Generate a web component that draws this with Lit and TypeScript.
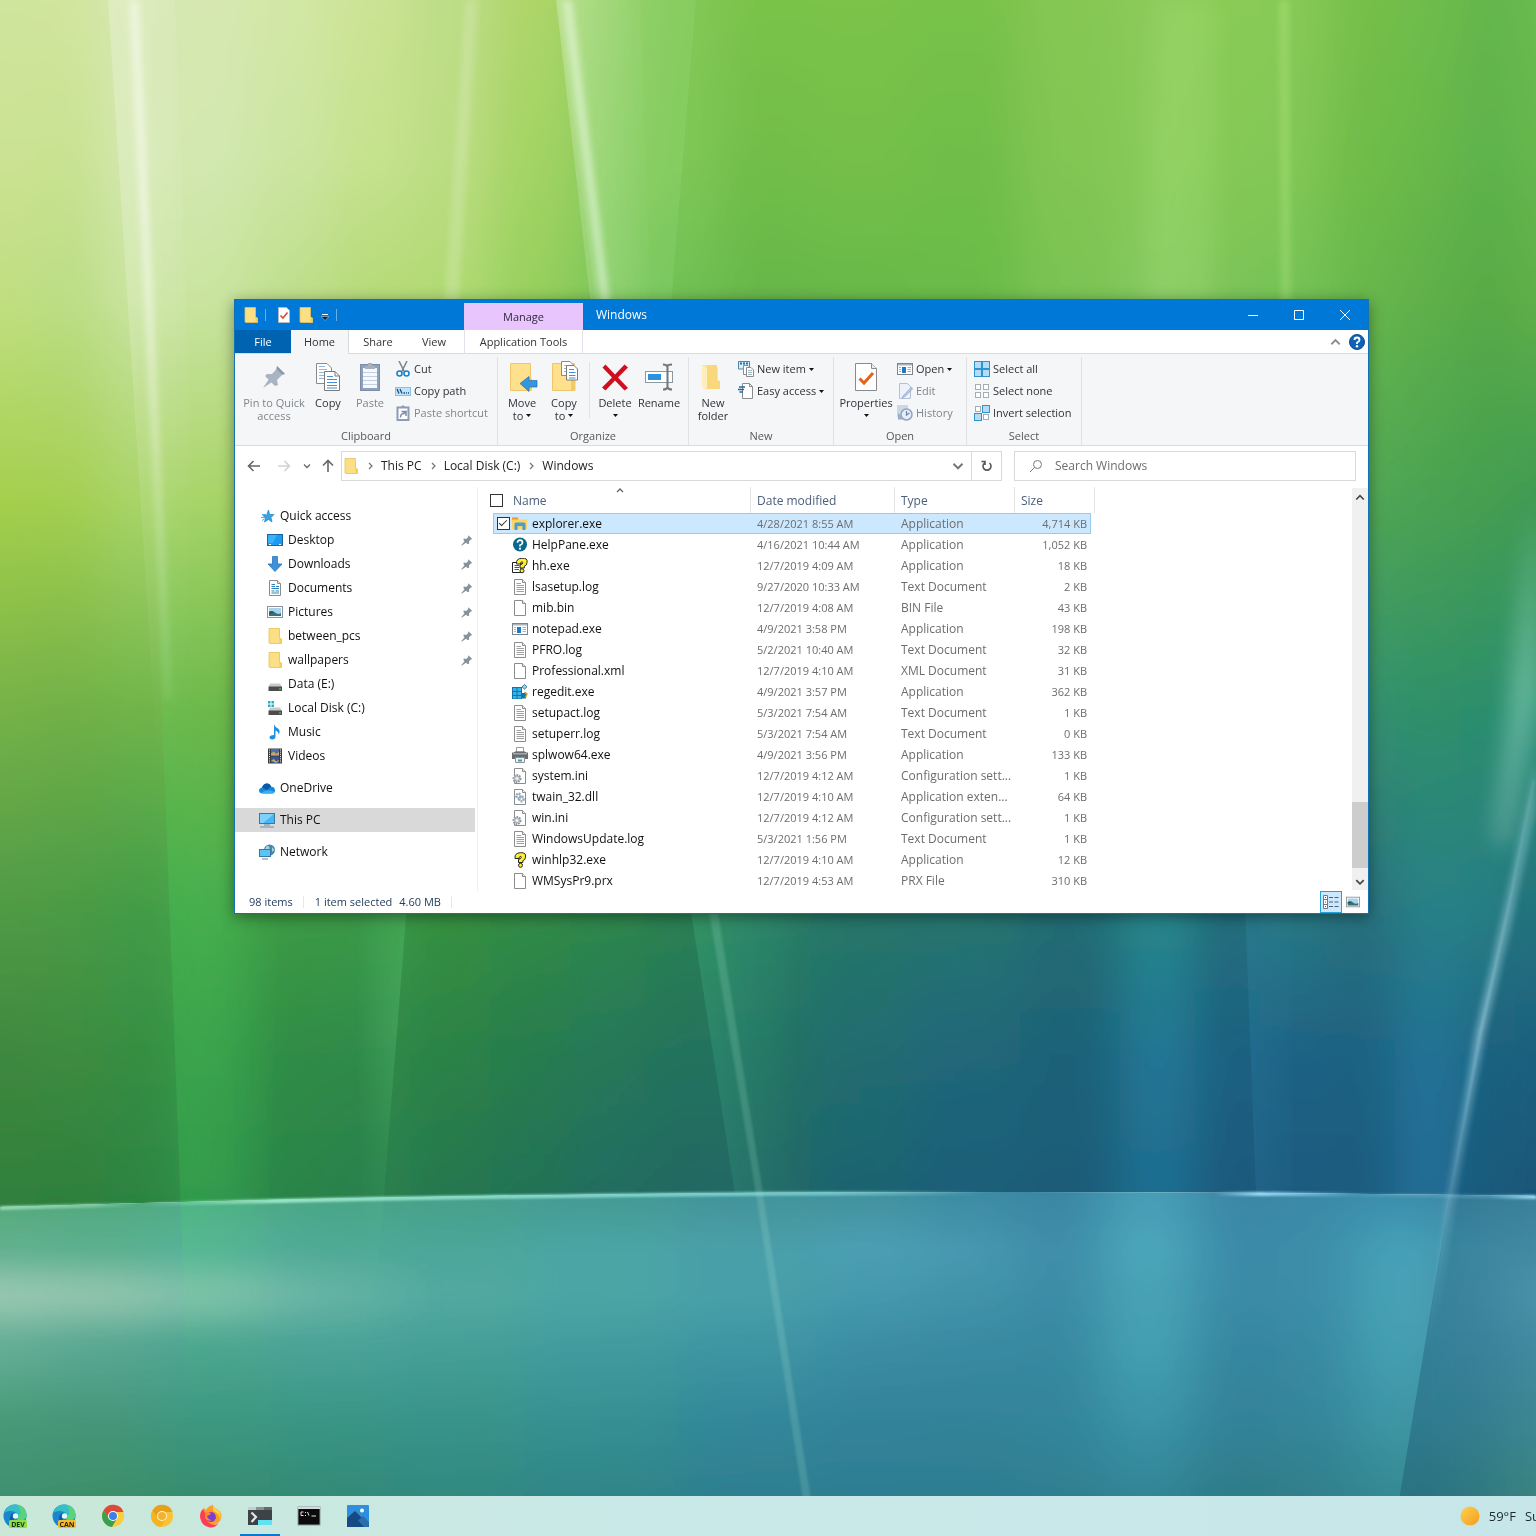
import { LitElement, html, css, svg, nothing, TemplateResult, SVGTemplateResult } from 'lit';
import { customElement, property, state } from 'lit/decorators.js';
import { classMap } from 'lit/directives/class-map.js';

// ---------- icons ----------

const page = svg`<path d="M2.500.500H10.500L13.500 3.500V15.500H2.500Z" fill="#fff" stroke="#8c8c8c"/><path d="M10.500.500V3.500H13.500" fill="#eee" stroke="#8c8c8c"/>`;

const gear = (x: number, y: number, r: number, color: string) => svg`
  <circle cx=${x} cy=${y} r=${r} fill="#e4e8eb" stroke=${color} stroke-width="2" stroke-dasharray="1.600 1"/>
  <circle cx=${x} cy=${y} r=${r - 1} fill="#cfd5da" stroke="#8f979e" stroke-width=".6"/>
  <circle cx=${x} cy=${y} r="1" fill="#fff"/>`;

const folder = svg`<path d="M2 .500H12.500V10L14.500 11V15.500H3L2 15Z" fill="#fbdf84" stroke="#e6c25c" stroke-width=".8"/><path d="M12.500 10V15.500H14.500V11Z" fill="#f3cc5c"/>`;

const picture = svg`<rect x=".500" y="2.500" width="15" height="11" fill="#fff" stroke="#8d9399"/><rect x="2" y="4" width="12" height="8" fill="#a9d4ee"/><path d="M2 8Q5 6 8 8.500T14 9V12H2Z" fill="#31727d"/><path d="M2 8Q4 6.500 7 8.500L2 10Z" fill="#2d5a4a"/>`;

const appWindow = svg`<rect x=".500" y="2.500" width="15" height="11" fill="#fff" stroke="#7d858c"/><rect x="1" y="3" width="14" height="1.500" fill="#a9b4bd"/><rect x="5" y="6" width="4" height="6" fill="#1c7bc4"/><path d="M2 6.500H4M2 8.500H4M2 10.500H4M10.500 6.500H14M10.500 8.500H14M10.500 10.500H14" stroke="#a6b0b8"/>`;

const smallPin = svg`<path d="M10 1.500L15 6.500L13 7.300L10.500 10L11 12.500L9 13.500L3 7.500L4 6L7 6.500L9.500 4Z"/><path d="M6 8.500L1 15L7.500 10.500Z" stroke="#87919b"/>`;

const helpMark = (fill: string, stroke: string) => svg`
  <path d="M3 6Q2.500 1 8.500 .700T13.500 5Q13.500 8 10.800 8.700V10.500H6.500V7.500Q9.600 6.500 9.300 5.200T8 4.400T7.200 6.500H3Z" fill=${fill} stroke=${stroke}/>
  <circle cx="8.500" cy="13.300" r="2" fill=${fill} stroke=${stroke}/>`;

const disk = svg`<path d="M3 7.500H13L15 11H1.500Z" fill="#c9c9c9"/><rect x="1.500" y="10.500" width="13.500" height="4.500" rx=".5" fill="#4c4c4c"/><rect x="12" y="12.500" width="2" height="1" fill="#55d46a"/>`;

const cells = (fills: boolean[]) => fills.map((on, i) => {
  const x = (i % 2) * 8;
  const y = Math.floor(i / 2) * 8;
  return on
    ? svg`<rect x=${x + 0.5} y=${y + 0.5} width="7" height="7" fill="#b5dcf7" stroke="#2f93cf"/>`
    : svg`<rect x=${x + 1.5} y=${y + 1.5} width="5" height="5" fill="#fff" stroke="#a5adb3"/>`;
});

const edge = svg`
  <circle cx="12" cy="12" r="11.500" fill="#1a86d0"/>
  <path d="M1 9Q4 .500 12 .500Q23.500 1 23.500 12Q22.500 17 16 16.500Q13 16 14.500 13.500Q15.500 9 11 7.500Q5 6 1 9Z" fill="#35bfc9"/>
  <path d="M15 1Q24 4 23.500 12Q22 17 16 16.500Q13.500 16 14.500 13.500Q20 10 15 1Z" fill="#5bd37a"/>
  <path d="M7 14Q8 8.500 12 9.500Q8 16 15 21Q18 22 20 20.500Q15 25 9 22.500Q6 19 7 14Z" fill="#0f5aa8"/>
  <circle cx="12.500" cy="12" r="2.700" fill="#e6f7f4"/>`;

const ICONS: Record<string, SVGTemplateResult> = {
  folder,
  picture,
  appWindow,
  smallPin,
  page,
  star: svg`<path d="M9.500 2L10.500 6.500L15 6.500L12 9.500L13 14L9.500 11.500L5.500 14L6.500 10L4 7.500H7.500Z" fill="#37a4e6" stroke="#1f7fc0" stroke-width=".7"/><path d="M3 6.500H7M2 9.500H6M3 12.500L5.500 11" stroke="#49aee8"/>`,
  desktop: svg`<rect x=".500" y="2.500" width="15" height="11" fill="#1b9bf0" stroke="#1766a3"/><path d="M1 3H10L6 11H1Z" fill="#3cb0f8"/><path d="M2 12.500H4M12 12.500H14" stroke="#fff"/>`,
  download: svg`<path d="M5.500.500H10.500V8H15L8 15.500L1 8H5.500Z" fill="#3d92dc" stroke="#2c74b5" stroke-width=".8"/>`,
  documents: svg`${page}<path d="M4.500 4.500H8M4.500 6.500H8M9 6.500H12M4.500 8.500H12M4.500 11H7.500M8.500 11H12M4.500 13H12" stroke="#2d83b9"/>`,
  disk,
  systemDisk: svg`${disk}<path d="M1 1H3.500V3.500H1ZM4.500 1H7V3.500H4.500ZM1 4.500H3.500V7H1ZM4.500 4.500H7V7H4.500Z" fill="#27aecb"/>`,
  music: svg`<path d="M7 .500Q8 3 11 4.500Q14 7 11.500 11Q12 7.500 8.500 6.500V12.500Q8.500 15.500 5 15.500Q2.500 15.500 2.500 13.500Q2.500 11 7 11Z" fill="#1f90e0"/>`,
  video: svg`<rect x="1" y=".500" width="14" height="15" fill="#3a3a3a"/><rect x="4" y="1" width="8" height="6.500" fill="#4a6fae"/><rect x="4" y="8.500" width="8" height="6.500" fill="#34569b"/><path d="M4 5.500L7 3.500L9 6L12 4V7.500H4ZM4 12.500L7 11L9 13.500L12 12V13L9 15Z" fill="#c8a863"/><path d="M2.500 1.500V15M13.500 1.500V15" stroke="#fff" stroke-dasharray="1 1.200"/>`,
  cloud: svg`<path d="M4 13.500Q0 13.500 0 10.500Q0 8 3 7.500Q4.500 3.500 8 3.500Q11 3.500 12 6.500Q16 7 16 10.500Q16 13.500 13 13.500Z" fill="#1689dc"/><path d="M3 7.500Q4.500 3.500 8 3.500Q11 3.500 12 6.500L8 10Z" fill="#0c59a4"/><path d="M2 13Q8 8 15.500 12Q14.500 13.500 13 13.500H4Z" fill="#37b0f2"/>`,
  pc: svg`<rect x=".500" y="1.500" width="15" height="10" fill="#45b7f5" stroke="#3a78a0"/><path d="M1 2H15L4 11H1Z" fill="#7fd0fb"/><path d="M5 13H11M1 15H15" stroke="#6b8ea8"/>`,
  network: svg`<circle cx="10.500" cy="6" r="5.500" fill="#4286b4"/><path d="M8 1.500Q12 3 10 6L6 5ZM13 3L15.500 6L13 8Z" fill="#a8d5d0"/><rect x=".500" y="5.500" width="11" height="7" fill="#5bc3f7" stroke="#3a78a0"/><path d="M3 15H9" stroke="#5e86a5"/>`,
  explorer: svg`<path d="M0 1.500H6L7.500 3.500H15V13H0Z" fill="#f9d566"/><path d="M0 1.500H6V3.500H0Z" fill="#e8962e"/><path d="M2.500 14V8Q2.500 6.500 4 6.500H12Q13.500 6.500 13.500 8V14H10.500V10H5.500V14Z" fill="#4b9ccf"/>`,
  helpPane: svg`<circle cx="8" cy="7.500" r="7" fill="#08678c"/><path d="M5.500 5.700Q5.500 3.200 8 3.200T10.500 5.700Q10.500 7.200 8 8.200V9.500" fill="none" stroke="#fff" stroke-width="1.700"/><circle cx="8" cy="11.700" r="1.100" fill="#fff"/>`,
  hh: svg`<path d="M.500 4.500H9V14.500H.500Z" fill="#fff" stroke="#222"/><path d="M2.500 7.500H7M2.500 9.500H7M2.500 11.500H7" stroke="#555"/><g transform="translate(1.500 -.500)">${helpMark('#fdf22d', '#222')}</g>`,
  text: svg`${page}<path d="M4.500 4.500H9M4.500 6.500H12M4.500 8.500H12M4.500 10.500H12M4.500 12.500H12" stroke="#a0a0a0"/>`,
  regedit: svg`<path d="M0 3H10V15H0Z" fill="#1673a8"/><path d="M1 4H4.500V7H1ZM5.500 4H9V7H5.500ZM1 8H4.500V11H1ZM5.500 8H9V11H5.500ZM1 12H4.500V14.500H1ZM5.500 12H9V14.500H5.500Z" fill="#35b3ea"/><path d="M10 9H14V14.500H10Z" fill="#1673a8"/><path d="M12.500 .500L15 2.800L12.500 5.200L10 2.800Z" fill="#9fd4ea" stroke="#2d6d8e" stroke-width=".9"/><path d="M12.500 8L15 10L13.500 13.500" fill="none" stroke="#c7a543" stroke-width="1.500"/>`,
  printer: svg`<path d="M4.500.500H11.500V5H4.500Z" fill="#fff" stroke="#999"/><path d="M0 5.500H2L3 4.500H13L14 5.500H16V12H0Z" fill="#666c70"/><path d="M1 6H15V7.500H1Z" fill="#a3a9ad"/><path d="M3.500 10.500H12.500V15.500H3.500Z" fill="#e6f2f8" stroke="#8c9499"/><path d="M6 12.500H10V14.500H6Z" fill="#4ba0a8"/>`,
  ini: svg`${page}${gear(5, 10.5, 3.5, '#8f979e')}`,
  dll: svg`${page}${gear(6.5, 7, 2.4, '#8fa6b9')}${gear(9.5, 10, 2.4, '#8fa6b9')}`,
  winhlp: helpMark('#fdf22d', '#222'),
  cut: svg`<path d="M4 0L9.500 11M12 0L6.500 11" stroke="#77838c" stroke-width="1.500"/><circle cx="4.500" cy="12.500" r="2.500" fill="#fff" stroke="#1883c8" stroke-width="1.600"/><circle cx="11.500" cy="12.500" r="2.500" fill="#fff" stroke="#1883c8" stroke-width="1.600"/>`,
  copyPath: svg`<rect x=".500" y="4.500" width="15" height="8" fill="#c0e3fa" stroke="#8dbfe4"/><path d="M2 6L4 10.500M5 6L7 10.500M8.500 10H10M11 10H12M13 10H14" stroke="#114d7c" stroke-width="1.300"/>`,
  pasteShortcut: svg`<path d="M2.500 2.500H13.500V15H2.500Z" fill="#fff" stroke="#8d9cb5" stroke-width="2"/><path d="M5.500 3V1.500H7V.500H9V1.500H10.500V3Z" fill="#8d9cb5"/><path d="M5.500 12.500Q5.500 8.500 9 8.500V6.500H11V11M9 8.500L11 6.500H6.500" fill="none" stroke="#7c8dab" stroke-width="1.500"/>`,
  newItem: svg`<path d="M.500.500H11.500V8H.500Z" fill="#dbeefb" stroke="#52839f"/><path d="M2 2.500H4M5 2.500H7M8 2.500H10" stroke="#1b72ad" stroke-width="2"/><path d="M5.500 4.500H10L12.500 7V13.500H5.500Z" fill="#fff" stroke="#8c8c8c"/><path d="M8.500 6.500H13L15.500 9V15.500H8.500Z" fill="#fff" stroke="#8c8c8c"/><path d="M10 9.500H14M10 11.500H14M10 13.500H14" stroke="#9fb3c1"/>`,
  easyAccess: svg`<path d="M4.500.500H11.500L14.500 3.500V15.500H4.500Z" fill="#fff" stroke="#8c8c8c"/><path d="M11.500.500V3.500H14.500" fill="none" stroke="#8c8c8c"/><path d="M1 4H7M0 6.500H6M1.500 9H5" stroke="#256999" stroke-width="1.300"/>`,
  edit: svg`<path d="M2.500.500H10.500L13.500 3.500V15.500H2.500Z" fill="#edf2fa" stroke="#b3c0d6"/><path d="M14.500 4L6 13L5 15L7.500 14L15.500 6Z" fill="#b7c6df" stroke="#93a6c6" stroke-width=".7"/>`,
  history: svg`<path d="M0 0H11V12H0Z" fill="#cdd7e8"/><circle cx="9.500" cy="9.500" r="5.500" fill="#e8eef7" stroke="#8ea3c6" stroke-width="1.500"/><path d="M9.500 6V10L12.500 8" fill="none" stroke="#7188b3" stroke-width="1.300"/><path d="M1 8V14.500H8Z" fill="#97acd0"/>`,
  selectAll: svg`${cells([true, true, true, true])}`,
  selectNone: svg`${cells([false, false, false, false])}`,
  invert: svg`${cells([false, true, true, false])}`,
  check: svg`<path d="M2.500.500H10.500L13.500 3.500V15.500H2.500Z" fill="#fff" stroke="#b8b8c0"/><path d="M4.500 8.500L7 11L11.500 5.500" fill="none" stroke="#d5503c" stroke-width="1.700"/>`,
  details: svg`<path d="M.500 1.500H4.500V14.500H.500ZM.500 5.500H4.500M.500 10.500H4.500" fill="#fff" stroke="#777"/><path d="M2 3.500H3M2 8H3M2 12.500H3" stroke="#555"/><path d="M6 3.500H10M11.500 3.500H15.500M6 8H10M11.500 8H15.500M6 12.500H10M11.500 12.500H15.500" stroke="#4d616e"/>`,
};

const BIG: Record<string, SVGTemplateResult> = {
  pin: svg`<path d="M19 5L27 13L24 14L19 19L20 24L17 25L7 15L9 13L14 13L18.500 8Z" fill="#a9b4c2"/><path d="M11 18L5 27L14 21Z" fill="#a9b4c2"/><path d="M19 5L27 13L24 13.500L18.500 8Z" fill="#8a98aa"/>`,
  copy: svg`<path d="M4.500 2.500H15L19.500 7V22.500H4.500Z" fill="#fff" stroke="#8a8a8a"/><path d="M7 8.500H15M7 11.500H15M7 14.500H15M7 17.500H15M7 5.500H13" stroke="#8fb9dc"/><path d="M12.500 10.500H23L27.500 15V29.500H12.500Z" fill="#fff" stroke="#7b7b7b"/><path d="M23 10.500V15H27.500" fill="none" stroke="#7b7b7b"/><path d="M15 15.500H21M15 18.500H25M15 21.500H25M15 24.500H25M15 27H25" stroke="#4393d4"/>`,
  paste: svg`<rect x="6.500" y="3.500" width="19" height="26" fill="#8fa0bb" stroke="#7d8ca8"/><rect x="9" y="7" width="14" height="20" fill="#f5f8fc"/><path d="M11 5H14V2H18V5H21V8H11Z" fill="#a7b0bd"/><path d="M9 11.500H23M9 15.500H23M9 19.500H23M9 23.500H23" stroke="#c4cfdf"/>`,
  moveTo: svg`<path d="M4.500 2.500H24.500V29.500H4.500Z" fill="#ffe08c" stroke="#ecc86b"/><path d="M22 16H25L26 19V29.500H22Z" fill="#f3c963"/><path d="M31 19.500V26H23V30.500L14 22.500L23 15.500V19.500Z" fill="#3696da" stroke="#2471b0" stroke-width=".7"/>`,
  copyTo: svg`<path d="M4.500 2.500H26.500V29.500H4.500Z" fill="#ffe08c" stroke="#ecc86b"/><path d="M23 17H26L27.500 20V29.500H23Z" fill="#f3c963"/><path d="M13.500.500H22L25.500 4V14.500H13.500Z" fill="#fff" stroke="#8a8a8a"/><path d="M16 4.500H22M16 7.500H20M16 10.500H20" stroke="#8fb9dc"/><path d="M18.500 4.500H26L29.500 8V19H18.500Z" fill="#fff" stroke="#7b7b7b"/><path d="M21 8.500H26M21 11.500H27.500M21 14.500H27.500M21 17H27.500" stroke="#4393d4"/>`,
  delete: svg`<path d="M6.500 3.500L16 13.500L25.500 3.500L29 6.500L19 16.500L29 27L25.500 29.500L16 19.500L6.500 29.500L3 26.500L13 16.500L3.500 6.500Z" fill="#cf0f1f"/>`,
  rename: svg`<rect x="2.500" y="10.500" width="27" height="11" fill="#fff" stroke="#8d979e"/><rect x="5" y="13" width="13" height="6" fill="#2c92dd"/><path d="M20 3.500Q23.500 3.500 24 5.500Q24.500 3.500 29 3.500M24.500 5V27M20 28.500Q23.500 28.500 24.500 26.500Q25.500 28.500 29 28.500" fill="none" stroke="#70777c" stroke-width="2"/>`,
  newFolder: svg`<path d="M5 4H17L21 7V28H9L5 24Z" fill="#fbe4a1"/><path d="M10 4H20V19L23 20V28H10Z" fill="#f9d87d"/><path d="M5 4L10 8V30L5 26Z" fill="#ffedbd"/>`,
  properties: svg`<path d="M5.500 2.500H21.500L26.500 7.500V29.500H5.500Z" fill="#fff" stroke="#8a8a8a"/><path d="M21.500 2.500V7.500H26.500" fill="#eee" stroke="#8a8a8a"/><path d="M9.500 17.500L14 22L23 12" fill="none" stroke="#e5611c" stroke-width="3"/>`,
};

const TASKS: Record<string, SVGTemplateResult> = {
  dev: svg`${edge}<rect x="6" y="16" width="18" height="8" rx="1.500" fill="#8ce046"/><text x="15" y="23" font-size="7" font-weight="700" text-anchor="middle" fill="#14301a">DEV</text>`,
  canary: svg`${edge}<rect x="6" y="16" width="18" height="8" rx="1.500" fill="#f7bb2d"/><text x="15" y="23" font-size="7" font-weight="700" text-anchor="middle" fill="#2c2008">CAN</text>`,
  chrome: svg`<circle cx="12" cy="12" r="11" fill="#f9cd3c"/><path d="M2.500 6.500A11 11 0 0 1 22.500 8H12L7.500 14Z" fill="#dd4a3d"/><path d="M2.500 6.500A11 11 0 0 0 11 23L16 14.500H8Z" fill="#36a251"/><circle cx="12" cy="12" r="5" fill="#fff"/><circle cx="12" cy="12" r="4" fill="#3f7de8"/>`,
  chromeCanary: svg`<circle cx="12" cy="12" r="11" fill="#fbc234"/><path d="M2.500 6.500A11 11 0 0 1 22.500 8H12L7.500 14Z" fill="#e5a11b"/><path d="M2.500 6.500A11 11 0 0 0 11 23L16 14.500H8Z" fill="#f5b322"/><circle cx="12" cy="12" r="5" fill="#fff3cf"/><circle cx="12" cy="12" r="4" fill="#f0b232"/>`,
  firefox: svg`<path d="M5 4L7 6Q9 2 14 1Q15 4 18 5Q23 8 22.500 13.500A11 10.500 0 0 1 1 13Q1 7 5 4Z" fill="#ff9a2b"/><path d="M1 12Q1 8 4 5L6 9L14 8L17 14Q14 20 8 17Q15 24 20 19Q16 24 11 23.500Q2 22.500 1 12Z" fill="#fb3d58"/><circle cx="12" cy="13" r="4.800" fill="#7b3fd0"/><path d="M6 9Q10 7 12 10L8 12Q9 16 13 16Q8 18 6 14Z" fill="#ff8b31"/><path d="M14 1Q15 5 19 6Q23 10 21 16Q20 9 14 7Z" fill="#ffd33f"/>`,
  terminal: svg`<rect x="0" y="3" width="24" height="18" fill="#3d4247"/><path d="M0 3H8V6H0Z" fill="#c9cccd"/><path d="M8 3H16V6H8Z" fill="#8d9193"/><path d="M16 3H24V6H16Z" fill="#64696c"/><path d="M3.500 8.500L8 13L3.500 18" fill="none" stroke="#e2e4e5" stroke-width="2.200"/><rect x="10" y="16" width="14" height="5" fill="#5fe3f2"/>`,
  cmd: svg`<rect x="1" y="3" width="22" height="18" fill="#0b0b0b" stroke="#8f979c"/><rect x="1" y="3" width="22" height="2" fill="#d5dadd"/><path d="M6.500 8H4V11.500H6.500M8.500 8V9M8.500 11V12M10.500 8L12 11.500M14.500 12H19" fill="none" stroke="#e5e5e5"/>`,
  photos: svg`<rect x="1" y="1" width="22" height="22" rx="1" fill="#2d8fdd"/><path d="M1 14L9 7L23 21V22Q23 23 22 23H1Z" fill="#174a83"/><path d="M12 16.500L17 12L23 18V22L22 23H18Z" fill="#2c6dab"/><circle cx="16" cy="6.500" r="2" fill="#fff"/>`,
};

const icon = (name: string, size = 16) => {
  const set = size === 16 ? ICONS : size === 32 ? BIG : TASKS;
  return html`<svg class="icon" width=${size} height=${size} viewBox=${`0 0 ${size} ${size}`} aria-hidden="true">${set[name]}</svg>`;
};

const chevron = (dir: 'up' | 'down' | 'right', size = 8) => {
  const d = { up: 'M1 6L4 3L7 6', down: 'M1 2.500L4 5.500L7 2.500', right: 'M3 1L6 4L3 7' }[dir];
  return html`<svg class="chevron" width=${size} height=${size} viewBox="0 0 8 8" aria-hidden="true"><path d=${d} fill="none" stroke="currentColor" stroke-width="1.300"/></svg>`;
};

const caret = html`<svg class="caret" width="5" height="3" viewBox="0 0 5 3" aria-hidden="true"><path d="M0 0H5L2.500 3Z" fill="currentColor"/></svg>`;

// ---------- wallpaper ----------

// Each column: centre x, then colours from top to bottom.
const UPPER_STOPS = [0, 13, 25, 42, 59, 76, 88, 100];
const UPPER: [number, string[]][] = [
  [0, ['#cfe49c', '#cbe293', '#c1df80', '#a3cf4c', '#76b247', '#4f9a45', '#3e883f', '#30803c']],
  [70, ['#d1e59d', '#c8e291', '#bcdd85', '#a3cf50', '#72b047', '#4a9a45', '#3d8b40', '#2e7f3d']],
  [140, ['#d6e8b2', '#d4e8b0', '#cae4a0', '#a8d468', '#70b54a', '#429b46', '#358d43', '#2c8441']],
  [210, ['#d6e8b0', '#d2e8b0', '#cae4a0', '#a8d468', '#70b54a', '#46a74b', '#389c4a', '#2f924b']],
  [290, ['#d2e7a6', '#cce5a2', '#bfdf8c', '#98cc58', '#68b34a', '#3c9a43', '#2f8c46', '#2a8448']],
  [370, ['#cbe394', '#c6e28e', '#b6da78', '#90c858', '#60ae4a', '#3b9a48', '#2f8a49', '#2a804e']],
  [450, ['#bedd88', '#bcdd82', '#b0da74', '#88c658', '#58aa4a', '#359040', '#2b8246', '#257650']],
  [530, ['#aed668', '#a4d464', '#97d05c', '#78c050', '#50a04a', '#318b45', '#277c4e', '#237256']],
  [610, ['#94ce62', '#8acb5c', '#7dc659', '#62b84e', '#489a4a', '#2e874c', '#267859', '#226c60']],
  [680, ['#82c856', '#7fc757', '#70c053', '#58b04e', '#44964a', '#2a8051', '#24725c', '#226763']],
  [760, ['#7ac349', '#72be48', '#66b64a', '#55aa4e', '#40904e', '#2a8065', '#227262', '#206866']],
  [860, ['#7bc34a', '#75c04a', '#68b84a', '#55a84e', '#3c8c55', '#267669', '#206c70', '#1e6370']],
  [960, ['#78c248', '#70be48', '#6abb49', '#52a652', '#3a8c60', '#26756f', '#20677a', '#1c5e78']],
  [1080, ['#86c752', '#82c652', '#7ac354', '#5aab55', '#3a8c66', '#246c72', '#1d6178', '#1a5b78']],
  [1160, ['#8ccb5a', '#8acb5b', '#84c960', '#60b058', '#3c9070', '#26878b', '#217795', '#1f6e92']],
  [1230, ['#8acb57', '#85c957', '#7bc458', '#58ac58', '#379070', '#236a78', '#1c5f80', '#1a587a']],
  [1290, ['#88ca56', '#82c856', '#76c256', '#55aa58', '#349070', '#267a85', '#1e6285', '#1b5a7f']],
  [1360, ['#76c04a', '#70bc49', '#68b74c', '#50a655', '#349070', '#296f7c', '#1e6181', '#1b5a7d']],
  [1430, ['#6fbc4c', '#68b849', '#5eb04a', '#4aa252', '#2f9068', '#288088', '#217396', '#206e98']],
  [1490, ['#62b54c', '#5cb24c', '#56a946', '#449e50', '#2c8d6c', '#277e84', '#1f6684', '#1c5c7d']],
  [1540, ['#6cbc50', '#66b84c', '#60b048', '#3e9a54', '#2f9478', '#23707c', '#1d5f7e', '#195578']],
];

const LOWER_STOPS = [0, 18, 33, 50, 75, 100];
const LOWER: [number, string[]][] = [
  [0, ['#55a878', '#62b18f', '#86bda6', '#66ae97', '#469a78', '#3e9072']],
  [90, ['#50a87c', '#5cb090', '#82bba4', '#5aa892', '#45967a', '#3d8f68']],
  [210, ['#4eac85', '#57b298', '#6eb7a2', '#4da590', '#3d9880', '#368c70']],
  [330, ['#4aa584', '#50aa97', '#5cafa0', '#4ba398', '#3a9585', '#338a77']],
  [450, ['#46a08a', '#4da699', '#52a9a0', '#469f98', '#39938a', '#318980']],
  [600, ['#439a94', '#4ca5a5', '#4ca5a5', '#429b9e', '#369092', '#2f8588']],
  [750, ['#429499', '#4a9fa9', '#489fa9', '#3f95a3', '#338799', '#2e7f90']],
  [880, ['#42929f', '#4c9fb3', '#4599ac', '#3c8da4', '#32839a', '#2d7d92']],
  [960, ['#3d8ca4', '#4798b1', '#4193aa', '#398aa3', '#338398', '#2d7d90']],
  [1070, ['#3a86a3', '#3d8ca8', '#3c8ba6', '#3788a1', '#33859a', '#2f7f90']],
  [1145, ['#48a0b8', '#4da9bd', '#49a5b8', '#45a3b5', '#3b95a8', '#328696']],
  [1235, ['#3a86a5', '#3b8aa8', '#3a8aa6', '#3685a0', '#338298', '#2e7b88']],
  [1320, ['#3b8aa7', '#3c8da8', '#3c8da8', '#398aa4', '#35869a', '#30808c']],
  [1400, ['#3c8fae', '#45a3b9', '#47a5b9', '#45a3b3', '#3f98a6', '#358b94']],
  [1470, ['#3e87a2', '#4494ae', '#468fa9', '#428ca4', '#3c889a', '#388286']],
  [1540, ['#3b7f9a', '#4388a0', '#4a93a8', '#428aa0', '#3c8792', '#3a8480']],
];

@customElement('desk-wallpaper')
export class DeskWallpaper extends LitElement {
  static styles = css`
    :host {
      position: absolute;
      inset: 0;
      z-index: -1;
    }

    svg {
      display: block;
      width: 100%;
      height: 100%;
    }
  `;

  private columns(id: string, data: [number, string[]][], stops: number[], y: number, height: number) {
    return data.map(([x, colors], i) => {
      const from = i === 0 ? -150 : (data[i - 1][0] + x) / 2;
      const to = i === data.length - 1 ? 1700 : (data[i + 1][0] + x) / 2;
      return svg`
        <linearGradient id=${id + i} gradientUnits="userSpaceOnUse" x1="0" x2="0" y1=${y} y2=${y + height}>
          ${colors.map((c, n) => svg`<stop offset=${stops[n] + '%'} stop-color=${c}/>`)}
        </linearGradient>
        <rect x=${from} y=${y - 100} width=${to - from + 1} height=${height + 200} fill=${`url(#${id}${i})`}/>`;
    });
  }

  render() {
    return html`
      <svg viewBox="0 0 1536 1536" preserveAspectRatio="none" aria-hidden="true">
        <defs>
          <filter id="soft" filterUnits="userSpaceOnUse" x="-150" y="-100" width="1836" height="1750"><feGaussianBlur stdDeviation="24 8"/></filter>
          <filter id="wide" filterUnits="userSpaceOnUse" x="-150" y="-100" width="1836" height="1750"><feGaussianBlur stdDeviation="30 8"/></filter>
          <filter id="glow" filterUnits="userSpaceOnUse" x="-100" y="-100" width="1736" height="1736"><feGaussianBlur stdDeviation="3"/></filter>
          <filter id="fine" filterUnits="userSpaceOnUse" x="-100" y="-100" width="1736" height="1736"><feGaussianBlur stdDeviation="1"/></filter>
          <filter id="haze" filterUnits="userSpaceOnUse" x="-100" y="-100" width="1736" height="1736"><feGaussianBlur stdDeviation="12"/></filter>
          <clipPath id="sky"><path d="M0 0H1536V1196Q770 1184 0 1207Z"/></clipPath>
          <clipPath id="floor"><path d="M0 1207Q770 1184 1536 1196V1536H0Z"/></clipPath>
          <linearGradient id="down" gradientUnits="userSpaceOnUse" x1="0" x2="0" y1="0" y2="800"><stop stop-color="#fff"/><stop offset=".35" stop-color="#fff"/><stop offset="1" stop-color="#000"/></linearGradient>
          <linearGradient id="rise" gradientUnits="userSpaceOnUse" x1="0" x2="0" y1="450" y2="1420"><stop stop-color="#000"/><stop offset=".45" stop-color="#fff"/><stop offset=".75" stop-color="#fff"/><stop offset="1" stop-color="#000"/></linearGradient>
          <linearGradient id="sink" gradientUnits="userSpaceOnUse" x1="0" x2="0" y1="700" y2="1360"><stop stop-color="#666"/><stop offset=".5" stop-color="#fff"/><stop offset="1" stop-color="#000"/></linearGradient>
          <mask id="fadeDown" maskUnits="userSpaceOnUse" x="0" y="0" width="1536" height="1536"><rect width="1536" height="1536" fill="url(#down)"/></mask>
          <mask id="fadeRise" maskUnits="userSpaceOnUse" x="0" y="0" width="1536" height="1536"><rect width="1536" height="1536" fill="url(#rise)"/></mask>
          <mask id="fadeSink" maskUnits="userSpaceOnUse" x="0" y="0" width="1536" height="1536"><rect width="1536" height="1536" fill="url(#sink)"/></mask>
          <linearGradient id="beamL"><stop stop-color="#fff" stop-opacity=".25"/><stop offset="1" stop-color="#fff" stop-opacity="0"/></linearGradient>
          <linearGradient id="beamR"><stop offset=".4" stop-color="#7cf09a" stop-opacity="0"/><stop offset="1" stop-color="#7cf09a" stop-opacity=".24"/></linearGradient>
          <linearGradient id="beamG"><stop stop-color="#4dff6c" stop-opacity=".16"/><stop offset="1" stop-color="#4dff6c" stop-opacity="0"/></linearGradient>
          <linearGradient id="beamT"><stop stop-color="#5ff0b0" stop-opacity=".17"/><stop offset="1" stop-color="#5ff0b0" stop-opacity="0"/></linearGradient>
          <linearGradient id="beamB"><stop stop-color="#5ad4ff" stop-opacity=".1"/><stop offset="1" stop-color="#5ad4ff" stop-opacity=".02"/></linearGradient>
          <linearGradient id="fog"><stop stop-color="#d5efdc" stop-opacity=".22"/><stop offset=".55" stop-color="#d5efdc" stop-opacity=".14"/><stop offset="1" stop-color="#d5efdc" stop-opacity="0"/></linearGradient>
          <linearGradient id="shade" gradientUnits="userSpaceOnUse" x1="1420" x2="1536" y1="0" y2="0"><stop stop-color="#0b4160" stop-opacity=".3"/><stop offset="1" stop-color="#0b4160" stop-opacity="0"/></linearGradient>
          <linearGradient id="horizon" gradientUnits="userSpaceOnUse" x1="0" x2="1536" y1="0" y2="0">
            <stop stop-color="#a5e6c4" stop-opacity=".8"/><stop offset=".06" stop-color="#a5e6c4" stop-opacity=".5"/><stop offset=".09" stop-color="#a5e6c4" stop-opacity="0"/>
            <stop offset=".18" stop-color="#a5efd0" stop-opacity=".9"/><stop offset=".54" stop-color="#87dde0" stop-opacity=".7"/><stop offset=".64" stop-color="#87dde0" stop-opacity="0"/>
            <stop offset=".79" stop-color="#a5e6ff" stop-opacity="0"/><stop offset=".82" stop-color="#a5e6ff" stop-opacity=".9"/><stop offset=".88" stop-color="#a5e6ff" stop-opacity=".1"/><stop offset=".97" stop-color="#a5e6ff" stop-opacity=".2"/><stop offset="1" stop-color="#a5e6ff" stop-opacity=".9"/>
          </linearGradient>
        </defs>
        <g clip-path="url(#sky)"><g filter="url(#soft)">${this.columns('u', UPPER, UPPER_STOPS, 0, 1200)}</g></g>
        <g clip-path="url(#floor)"><g filter="url(#wide)">${this.columns('l', LOWER, LOWER_STOPS, 1196, 300)}</g></g>

        <g mask="url(#fadeDown)">
          <path d="M108 0H175L205 800H160Z" fill="url(#beamL)"/>
          <path d="M129 0H139L172 700H164Z" fill="#fff" opacity=".45" filter="url(#glow)"/>
          <path d="M556 0H640L655 420H604Z" fill="url(#beamL)"/>
          <path d="M562 0H572L622 400H614Z" fill="#fff" opacity=".5" filter="url(#glow)"/>
          <path d="M558 0H696L655 500H620Z" fill="#a8f0a0" opacity=".14"/>
          <path d="M465 0H478L452 400H438Z" fill="#fff" opacity=".18" filter="url(#glow)"/>
          <path d="M1155 0H1215V310H1145Z" fill="#d5ffa0" opacity=".12" filter="url(#haze)"/>
          <path d="M1279 0H1289L1291 310H1281Z" fill="#d5ffa0" opacity=".22" filter="url(#glow)"/>
        </g>

        <g mask="url(#fadeRise)">
          <path d="M152 450H290L262 1500H192Z" fill="url(#beamG)"/>
        </g>
        <g mask="url(#fadeSink)">
          <path d="M340 880H409L384 1194L365 1400H320Z" fill="url(#beamR)"/>
        </g>
        <path d="M686 880H800L800 1194H735Z" fill="url(#beamT)"/>
        <path d="M707 900H716L763 1194L811 1500H803L756 1194Z" fill="#c0f5e0" opacity=".16" filter="url(#fine)"/>
        <path d="M1244 880H1292V1192H1256Z" fill="url(#beamB)"/>

        <path d="M1536 760V1536H1393L1450 1194L1515 880Z" fill="url(#shade)"/>
        <path d="M1536 500V690L1506 850L1496 840Z" fill="#d5fff0" opacity=".4" filter="url(#haze)"/>
        <g mask="url(#fadeSink)">
          <path d="M1536 760V810L1512 920L1485 1034L1455 1199L1430 1360L1446 1199L1475 1034L1501 920Z" fill="#c8efff" opacity=".42" filter="url(#glow)"/>
          <path d="M1534 780L1508 910L1480 1034L1450 1199L1425 1360" fill="none" stroke="#c8efff" stroke-opacity=".3" stroke-width="2" filter="url(#fine)"/>
        </g>

        <path d="M0 1208Q770 1185 1536 1197" fill="none" stroke="url(#horizon)" stroke-width="4" filter="url(#fine)"/>
        <rect x="-60" y="1270" width="500" height="50" fill="url(#fog)" filter="url(#haze)"/>
      </svg>
    `;
  }
}

// ---------- ribbon button ----------

@customElement('ribbon-button')
export class RibbonButton extends LitElement {
  @property() icon = '';
  @property() label = '';
  @property() second = '';
  @property({ type: Boolean }) big = false;
  @property({ type: Boolean }) menu = false;
  @property({ type: Boolean }) disabled = false;

  static styles = css`
    :host {
      display: block;
      flex: none;
    }

    button {
      display: flex;
      align-items: center;
      gap: 3px;
      width: 100%;
      height: 22px;
      padding: 0;
      border: 0;
      background: none;
      color: #2f3338;
      font: inherit;
      white-space: nowrap;
    }

    button.big {
      flex-direction: column;
      height: auto;
      line-height: 13px;
    }

    button:disabled {
      color: #81868b;
    }

    button:hover:enabled {
      background: #e5f1fb;
    }

    .icon {
      flex: none;
      display: block;
    }

    .second {
      display: flex;
      align-items: center;
      justify-content: center;
      gap: 3px;
      min-height: 13px;
    }

    .caret {
      flex: none;
      color: #111;
    }
  `;

  render() {
    if (this.big) {
      return html`
        <button class="big" ?disabled=${this.disabled}>
          ${icon(this.icon, 32)}
          <span>${this.label}<span class="second">${this.second}${this.menu ? caret : nothing}</span></span>
        </button>
      `;
    }
    return html`
      <button ?disabled=${this.disabled}>${icon(this.icon)}<span>${this.label}</span>${this.menu ? caret : nothing}</button>
    `;
  }
}

// ---------- explorer window ----------

interface FileRow {
  name: string;
  date: string;
  type: string;
  size: string;
  icon: string;
}

const row = (name: string, date: string, type: string, size: string, icon: string): FileRow => ({ name, date, type, size, icon });

const FILES: FileRow[] = [
  row('explorer.exe', '4/28/2021 8:55 AM', 'Application', '4,714 KB', 'explorer'),
  row('HelpPane.exe', '4/16/2021 10:44 AM', 'Application', '1,052 KB', 'helpPane'),
  row('hh.exe', '12/7/2019 4:09 AM', 'Application', '18 KB', 'hh'),
  row('lsasetup.log', '9/27/2020 10:33 AM', 'Text Document', '2 KB', 'text'),
  row('mib.bin', '12/7/2019 4:08 AM', 'BIN File', '43 KB', 'page'),
  row('notepad.exe', '4/9/2021 3:58 PM', 'Application', '198 KB', 'appWindow'),
  row('PFRO.log', '5/2/2021 10:40 AM', 'Text Document', '32 KB', 'text'),
  row('Professional.xml', '12/7/2019 4:10 AM', 'XML Document', '31 KB', 'page'),
  row('regedit.exe', '4/9/2021 3:57 PM', 'Application', '362 KB', 'regedit'),
  row('setupact.log', '5/3/2021 7:54 AM', 'Text Document', '1 KB', 'text'),
  row('setuperr.log', '5/3/2021 7:54 AM', 'Text Document', '0 KB', 'text'),
  row('splwow64.exe', '4/9/2021 3:56 PM', 'Application', '133 KB', 'printer'),
  row('system.ini', '12/7/2019 4:12 AM', 'Configuration sett...', '1 KB', 'ini'),
  row('twain_32.dll', '12/7/2019 4:10 AM', 'Application exten...', '64 KB', 'dll'),
  row('win.ini', '12/7/2019 4:12 AM', 'Configuration sett...', '1 KB', 'ini'),
  row('WindowsUpdate.log', '5/3/2021 1:56 PM', 'Text Document', '1 KB', 'text'),
  row('winhlp32.exe', '12/7/2019 4:10 AM', 'Application', '12 KB', 'winhlp'),
  row('WMSysPr9.prx', '12/7/2019 4:53 AM', 'PRX File', '310 KB', 'page'),
];

const QUICK: { label: string; icon: string; pinned?: boolean }[] = [
  { label: 'Desktop', icon: 'desktop', pinned: true },
  { label: 'Downloads', icon: 'download', pinned: true },
  { label: 'Documents', icon: 'documents', pinned: true },
  { label: 'Pictures', icon: 'picture', pinned: true },
  { label: 'between_pcs', icon: 'folder', pinned: true },
  { label: 'wallpapers', icon: 'folder', pinned: true },
  { label: 'Data (E:)', icon: 'disk' },
  { label: 'Local Disk (C:)', icon: 'systemDisk' },
  { label: 'Music', icon: 'music' },
  { label: 'Videos', icon: 'video' },
];

@customElement('explorer-window')
export class ExplorerWindow extends LitElement {
  @state() private selected = 'explorer.exe';

  static styles = css`
    :host {
      display: flex;
      flex-direction: column;
      box-sizing: border-box;
      border: 1px solid #1272b6;
      background: #fff;
      color: #111;
      box-shadow: 0 3px 14px rgba(0, 0, 0, 0.4);
    }

    button {
      display: flex;
      align-items: center;
      justify-content: center;
      padding: 0;
      border: 0;
      background: none;
      color: inherit;
      font: inherit;
      white-space: nowrap;
    }

    .icon,
    .chevron {
      display: block;
      flex: none;
    }

    .titlebar {
      display: flex;
      height: 30px;
      background: #0078d7;
      color: #fff;
    }

    .quick {
      display: flex;
      align-items: center;
      box-sizing: border-box;
      width: 229px;
      gap: 6px;
      padding-left: 8px;
    }

    .quick .bar {
      width: 1px;
      height: 12px;
      margin-right: 4px;
      background: #68aee8;
    }

    .quick .more {
      padding: 3px 1px 0;
    }

    .manage {
      display: flex;
      align-items: center;
      justify-content: center;
      width: 119px;
      margin-top: 3px;
      background: #e8c6fd;
      color: #33283d;
      font-size: 11px;
    }

    .title {
      flex: 1;
      padding-left: 13px;
      line-height: 30px;
    }

    .controls button {
      width: 46px;
      height: 30px;
    }

    .controls {
      display: flex;
    }

    .tabs {
      display: flex;
      height: 23px;
      border-bottom: 1px solid #dadbdc;
      color: #333;
      font-size: 11px;
    }

    .tabs button {
      width: 58px;
    }

    .tabs .file {
      width: 56px;
      background: #0063b1;
      color: #fff;
    }

    .tabs .active {
      height: 24px;
      background: #f5f6f7;
      border-right: 1px solid #dadbdc;
      box-sizing: border-box;
    }

    .tabs .view {
      width: 54px;
    }

    .tabs .tools {
      box-sizing: border-box;
      width: 119px;
      margin-left: 3px;
      border: solid #e6e0ea;
      border-width: 0 1px;
    }

    .tabs .help {
      display: flex;
      align-items: center;
      gap: 8px;
      margin-left: auto;
      padding-right: 3px;
      color: #8c8c8c;
    }

    .tabs .help button {
      width: auto;
    }

    .ribbon {
      display: flex;
      height: 91px;
      background: #f5f6f7;
      border-bottom: 1px solid #dadbdc;
      font-size: 11px;
    }

    .group {
      display: flex;
      flex-direction: column;
      box-sizing: border-box;
      margin-top: 3px;
      border-right: 1px solid #e1e2e4;
    }

    .tools-row {
      display: flex;
      flex: 1;
      box-sizing: border-box;
      padding-top: 1px;
    }

    .tools-row ribbon-button[big] {
      margin-top: 3px;
    }

    .tools-row .divider {
      width: 1px;
      height: 56px;
      margin: 4px 3px 0;
      background: #e1e2e4;
    }

    .caption {
      text-align: center;
      line-height: 18px;
      color: #55585c;
    }

    .w34 { width: 34px; }
    .w40 { width: 40px; }
    .w44 { width: 44px; }
    .w48 { width: 48px; }
    .w50 { width: 50px; }
    .w56 { width: 56px; }
    .w74 { width: 74px; }

    .g-clip { width: 262px; padding-left: 2px; }
    .g-org { width: 190px; padding-left: 4px; }
    .g-new { width: 144px; padding-left: 2px; }
    .g-open { width: 132px; padding-left: 4px; }
    .g-sel { width: 114px; padding-left: 7px; }

    .stack {
      padding-left: 3px;
    }

    .nav {
      display: flex;
      align-items: center;
      height: 40px;
      padding-right: 12px;
      color: #666;
    }

    .arrows {
      display: grid;
      grid-template-columns: 38px 22px 24px 18px;
      width: 106px;
    }

    .address {
      display: flex;
      flex: 1;
      align-items: center;
      box-sizing: border-box;
      height: 30px;
      border: 1px solid #d9d9d9;
      padding-left: 1px;
      color: #222;
    }

    .address .chevron {
      margin: 0 7px;
      color: #777;
    }

    .address .open {
      margin-left: auto;
    }

    .address .refresh {
      width: 30px;
      height: 28px;
      border-left: 1px solid #d9d9d9;
      color: #555;
    }

    .search {
      display: flex;
      align-items: center;
      box-sizing: border-box;
      width: 342px;
      height: 30px;
      gap: 11px;
      margin-left: 12px;
      padding-left: 13px;
      border: 1px solid #d9d9d9;
    }

    .search input {
      flex: 1;
      min-width: 0;
      padding: 0;
      border: 0;
      outline: 0;
      background: none;
      font: inherit;
    }

    .search input::placeholder {
      color: #6d6d6d;
      opacity: 1;
    }

    .body {
      display: flex;
      flex: 1;
      padding-top: 1px;
    }

    .tree {
      box-sizing: border-box;
      width: 243px;
      padding: 17px 2px 0 0;
      border-right: 1px solid #f0f0f0;
    }

    .tree button {
      justify-content: flex-start;
      box-sizing: border-box;
      width: 100%;
      height: 24px;
      gap: 5px;
      padding: 0 2px 0 24px;
    }

    .tree .sub {
      padding-left: 32px;
    }

    .tree .space {
      margin-top: 8px;
    }

    .tree .current {
      background: #d9d9d9;
    }

    .tree .mark {
      margin-left: auto;
      fill: #87919b;
    }

    .list {
      flex: 1;
    }

    table {
      width: 609px;
      margin-left: 8px;
      border-spacing: 0;
      table-layout: fixed;
    }

    th {
      height: 25px;
      padding: 1px 0 0 6px;
      border-right: 1px solid #e5e5e5;
      color: #4c607a;
      font-weight: 400;
      text-align: left;
      position: relative;
    }

    th.all {
      padding-left: 4px;
      border: 0;
    }

    th.all + th {
      padding-left: 1px;
    }

    th .chevron {
      position: absolute;
      top: -1px;
      left: 104px;
      color: #666;
    }

    td {
      box-sizing: border-box;
      height: 21px;
      padding: 0 0 0 6px;
      border: solid transparent;
      border-width: 1px 0;
      color: #6d6d6d;
      line-height: 18px;
      white-space: nowrap;
    }

    .cell {
      display: flex;
      align-items: center;
      gap: 4px;
      color: #111;
    }

    td.tick,
    td.name,
    td.gap {
      padding: 0;
    }

    td.date,
    td.num {
      font-size: 11px;
    }

    td.num {
      padding-right: 4px;
      text-align: right;
    }

    tr.on td:not(.gap) {
      background: #cce8ff;
      border-color: #99c9ec;
    }

    tr.on .tick {
      box-shadow: inset 1px 0 #99c9ec;
    }

    tr.on .num {
      box-shadow: inset -1px 0 #99c9ec;
    }

    input[type='checkbox'] {
      appearance: none;
      display: block;
      width: 13px;
      height: 13px;
      margin: 0;
      border: 1px solid #333;
      background: #fff;
    }

    .tick input {
      margin-left: 4px;
      opacity: 0;
    }

    .on .tick input {
      opacity: 1;
    }

    .on .tick input::after {
      content: '';
      display: block;
      width: 7px;
      height: 3px;
      margin: 2px 0 0 1px;
      border: solid #333;
      border-width: 0 0 1px 1px;
      transform: rotate(-45deg);
    }

    .scroll {
      display: flex;
      flex-direction: column;
      justify-content: space-between;
      width: 16px;
      margin: 1px 0;
      background: #f0f0f0;
      color: #444;
    }

    .scroll button {
      height: 17px;
    }

    .scroll .thumb {
      height: 66px;
      margin-top: auto;
      margin-bottom: 5px;
      background: #cdcdcd;
    }

    .status {
      display: flex;
      align-items: center;
      height: 22px;
      padding: 0 4px 0 14px;
      color: #26405f;
      font-size: 11px;
    }

    .status .part {
      line-height: 12px;
      padding-right: 10px;
      margin-right: 11px;
      border-right: 1px solid #e8e8e8;
    }

    .status .part span {
      margin-left: 7px;
    }

    .views {
      display: flex;
      margin-left: auto;
    }

    .views button {
      box-sizing: border-box;
      width: 22px;
      height: 22px;
    }

    .views .active {
      background: #cce8ff;
      border: 1px solid #26a0da;
    }
  `;

  private group(cls: string, caption: string, content: TemplateResult) {
    return html`
      <div class="group" role="group" aria-label=${caption}>
        <div class="tools-row ${cls}">${content}</div>
        <div class="caption">${caption}</div>
      </div>
    `;
  }

  private renderTitle() {
    return html`
      <div class="titlebar">
        <div class="quick">
          ${icon('folder')}<span class="bar"></span>
          ${icon('check')}${icon('folder')}
          <button class="more" aria-label="Customize Quick Access Toolbar">
            <svg width="8" height="8" viewBox="0 0 8 8"><path d="M1 1.500H7" stroke="#fff"/><path d="M0 3.500H8L4 7.500Z" fill="#10213a" stroke="#d5e6f5" stroke-width=".500"/></svg>
          </button>
          <span class="bar"></span>
        </div>
        <div class="manage">Manage</div>
        <div class="title">Windows</div>
        <div class="controls">
          <button aria-label="Minimize"><svg width="10" height="10"><path d="M0 5.500H10" stroke="#fff"/></svg></button>
          <button aria-label="Maximize"><svg width="10" height="10"><path d="M.500.500H9.500V9.500H.500Z" stroke="#fff" fill="none"/></svg></button>
          <button aria-label="Close"><svg width="10" height="10"><path d="M0 0L10 10M10 0L0 10" stroke="#fff"/></svg></button>
        </div>
      </div>
    `;
  }

  private renderTabs() {
    return html`
      <div class="tabs">
        <button class="file">File</button>
        <button class="active">Home</button>
        <button>Share</button>
        <button class="view">View</button>
        <button class="tools">Application Tools</button>
        <div class="help">
          <button aria-label="Minimize the Ribbon">${chevron('up', 11)}</button>
          <button aria-label="Help">
            <svg width="16" height="16" viewBox="0 0 16 16"><circle cx="8" cy="8" r="7.500" fill="#0f62b5" stroke="#0a4c91"/><path d="M5.500 6Q5.500 3.500 8 3.500T10.500 6Q10.500 7.500 8 8.500V10" fill="none" stroke="#fff" stroke-width="1.800"/><circle cx="8" cy="12.200" r="1.200" fill="#fff"/></svg>
          </button>
        </div>
      </div>
    `;
  }

  private renderRibbon() {
    return html`
      <div class="ribbon">
        ${this.group('g-clip', 'Clipboard', html`
          <ribbon-button class="w74" big disabled icon="pin" label="Pin to Quick" second="access"></ribbon-button>
          <ribbon-button class="w34" big icon="copy" label="Copy"></ribbon-button>
          <ribbon-button class="w50" big disabled icon="paste" label="Paste"></ribbon-button>
          <div>
            <ribbon-button icon="cut" label="Cut"></ribbon-button>
            <ribbon-button icon="copyPath" label="Copy path"></ribbon-button>
            <ribbon-button disabled icon="pasteShortcut" label="Paste shortcut"></ribbon-button>
          </div>
        `)}
        ${this.group('g-org', 'Organize', html`
          <ribbon-button class="w40" big menu icon="moveTo" label="Move" second="to"></ribbon-button>
          <ribbon-button class="w44" big menu icon="copyTo" label="Copy" second="to"></ribbon-button>
          <span class="divider"></span>
          <ribbon-button class="w44" big menu icon="delete" label="Delete"></ribbon-button>
          <ribbon-button class="w44" big icon="rename" label="Rename"></ribbon-button>
        `)}
        ${this.group('g-new', 'New', html`
          <ribbon-button class="w44" big icon="newFolder" label="New" second="folder"></ribbon-button>
          <div class="stack">
            <ribbon-button menu icon="newItem" label="New item"></ribbon-button>
            <ribbon-button menu icon="easyAccess" label="Easy access"></ribbon-button>
          </div>
        `)}
        ${this.group('g-open', 'Open', html`
          <ribbon-button class="w56" big menu icon="properties" label="Properties"></ribbon-button>
          <div class="stack">
            <ribbon-button menu icon="appWindow" label="Open"></ribbon-button>
            <ribbon-button disabled icon="edit" label="Edit"></ribbon-button>
            <ribbon-button disabled icon="history" label="History"></ribbon-button>
          </div>
        `)}
        ${this.group('g-sel', 'Select', html`
          <div>
            <ribbon-button icon="selectAll" label="Select all"></ribbon-button>
            <ribbon-button icon="selectNone" label="Select none"></ribbon-button>
            <ribbon-button icon="invert" label="Invert selection"></ribbon-button>
          </div>
        `)}
      </div>
    `;
  }

  private renderNav() {
    const arrow = (d: string, color = '#666') => html`<svg width="16" height="16" viewBox="0 0 16 16" aria-hidden="true"><path d=${d} fill="none" stroke=${color} stroke-width="1.600"/></svg>`;
    return html`
      <div class="nav">
        <div class="arrows">
          <button aria-label="Back">${arrow('M14 8H3M7.500 3L2.500 8L7.500 13')}</button>
          <button aria-label="Forward" disabled>${arrow('M2 8H13M8.500 3L13.500 8L8.500 13', '#d2d2d2')}</button>
          <button aria-label="Recent locations">${chevron('down')}</button>
          <button aria-label="Up">${arrow('M8 14V3M3 7.500L8 2.500L13 7.500')}</button>
        </div>
        <div class="address">
          ${icon('folder')}${chevron('right')}
          <button>This PC</button>${chevron('right')}
          <button>Local Disk (C:)</button>${chevron('right')}
          <button>Windows</button>
          <button class="open" aria-label="Previous locations">${chevron('down', 12)}</button>
          <button class="refresh" aria-label="Refresh">
            <svg width="14" height="14" viewBox="0 0 14 14"><path d="M9.500 4A4 4 0 1 1 4.500 4M1.500 2.500H5V6" fill="none" stroke="currentColor" stroke-width="1.600"/></svg>
          </button>
        </div>
        <label class="search">
          <svg width="16" height="16" viewBox="0 0 16 16" aria-hidden="true"><circle cx="9.500" cy="6.500" r="4" fill="none" stroke="#777"/><path d="M6.500 9.500L2 14" stroke="#777"/></svg>
          <input type="text" placeholder="Search Windows" aria-label="Search Windows" />
        </label>
      </div>
    `;
  }

  private renderTree() {
    return html`
      <nav class="tree">
        <button>${icon('star')}Quick access</button>
        ${QUICK.map((q) => html`
          <button class="sub">
            ${icon(q.icon)}${q.label}
            ${q.pinned ? html`<svg class="mark" width="12" height="12" viewBox="0 0 16 16" aria-hidden="true">${ICONS.smallPin}</svg>` : nothing}
          </button>
        `)}
        <button class="space">${icon('cloud')}OneDrive</button>
        <button class="space current">${icon('pc')}This PC</button>
        <button class="space">${icon('network')}Network</button>
      </nav>
    `;
  }

  private renderRow(f: FileRow) {
    const on = f.name === this.selected;
    return html`
      <tr class=${classMap({ on })} @click=${() => (this.selected = f.name)}>
        <td class="gap"></td>
        <td class="tick"><input type="checkbox" aria-label=${`Select ${f.name}`} .checked=${on} /></td>
        <td class="name"><div class="cell">${icon(f.icon)}${f.name}</div></td>
        <td class="date">${f.date}</td>
        <td>${f.type}</td>
        <td class="num">${f.size}</td>
        <td class="gap"></td>
      </tr>
    `;
  }

  render() {
    return html`
      ${this.renderTitle()} ${this.renderTabs()} ${this.renderRibbon()} ${this.renderNav()}
      <div class="body">
        ${this.renderTree()}
        <div class="list">
          <table>
            <colgroup>
              <col style="width: 7px" /><col style="width: 19px" /><col style="width: 239px" /><col style="width: 144px" /><col style="width: 120px" /><col style="width: 76px" /><col style="width: 4px" />
            </colgroup>
            <thead>
              <tr>
                <th class="all" colspan="2"><input type="checkbox" aria-label="Select all items" /></th>
                <th>Name${chevron('up')}</th>
                <th>Date modified</th>
                <th>Type</th>
                <th colspan="2">Size</th>
              </tr>
            </thead>
            <tbody>
              ${FILES.map((f) => this.renderRow(f))}
            </tbody>
          </table>
        </div>
        <div class="scroll">
          <button aria-label="Scroll up">${chevron('up', 10)}</button>
          <div class="thumb"></div>
          <button aria-label="Scroll down">${chevron('down', 10)}</button>
        </div>
      </div>
      <div class="status">
        <span class="part">98 items</span>
        <span class="part">1 item selected<span>4.60 MB</span></span>
        <div class="views">
          <button class="active" aria-label="Details">${icon('details')}</button>
          <button aria-label="Large icons"><svg width="14" height="14" viewBox="0 0 16 16">${picture}</svg></button>
        </div>
      </div>
    `;
  }
}

// ---------- desktop ----------

@customElement('app-root')
export class AppRoot extends LitElement {
  static styles = css`
    :host {
      position: relative;
      isolation: isolate;
      display: flex;
      flex-direction: column;
      justify-content: flex-end;
      min-height: 100vh;
      overflow: hidden;
      font: 12px/16px 'Open Sans', 'Noto Sans', sans-serif;
    }

    explorer-window {
      position: absolute;
      top: 299px;
      left: 234px;
      right: 167px;
    }

    .taskbar {
      display: flex;
      height: 40px;
      background: linear-gradient(90deg, #c9e8d8, #c9e9e8 40%, #c6e6e9);
    }

    .apps {
      display: flex;
      margin-left: -10px;
    }

    .taskbar button {
      display: flex;
      align-items: center;
      justify-content: center;
      width: 49px;
      padding: 0;
      border: 0;
      background: none;
      font: inherit;
      position: relative;
    }

    .taskbar .running::after {
      content: '';
      position: absolute;
      bottom: 0;
      width: 40px;
      height: 2px;
      background: #0d78d0;
    }

    .taskbar .weather {
      width: auto;
      gap: 9px;
      margin: 0 -4px 0 auto;
      color: #1c2a2c;
      font-size: 13px;
    }
  `;

  render() {
    const apps = [
      ['dev', 'Edge Dev'],
      ['canary', 'Edge Canary'],
      ['chrome', 'Chrome'],
      ['chromeCanary', 'Chrome Canary'],
      ['firefox', 'Firefox'],
      ['terminal', 'Terminal'],
      ['cmd', 'Command Prompt'],
      ['photos', 'Photos'],
    ];
    return html`
      <desk-wallpaper></desk-wallpaper>
      <explorer-window></explorer-window>
      <div class="taskbar">
        <div class="apps">
          ${apps.map(([id, label]) => html`
            <button class=${classMap({ running: id === 'terminal' })} aria-label=${label}>${icon(id, 24)}</button>
          `)}
        </div>
        <button class="weather">
          <svg width="20" height="20" viewBox="0 0 20 20" aria-hidden="true">
            <defs><linearGradient id="sun" x1="0" y1="0" x2="1" y2="1"><stop stop-color="#fcd24c"/><stop offset="1" stop-color="#f59b20"/></linearGradient></defs>
            <circle cx="10" cy="10" r="9.500" fill="url(#sun)"/>
          </svg>
          <span>59°F</span><span>Su</span>
        </button>
      </div>
    `;
  }
}
